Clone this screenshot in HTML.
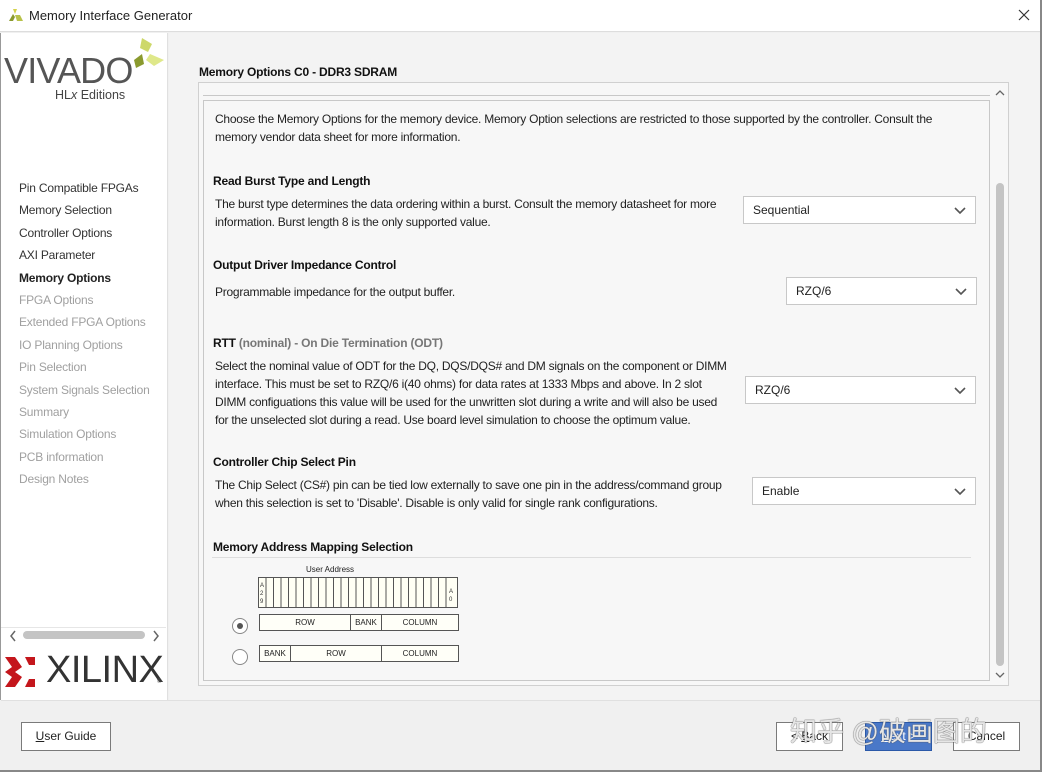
<!DOCTYPE html>
<html><head><meta charset="utf-8"><style>
*{margin:0;padding:0;box-sizing:border-box}
body{width:1042px;height:772px;position:relative;background:#f0f0f0;font-family:"Liberation Sans",Arial,sans-serif;font-size:12px;color:#222;overflow:hidden}
.a{position:absolute;white-space:nowrap}
.t{letter-spacing:-0.25px}
.h{font-weight:bold;font-size:12px;letter-spacing:-0.2px;color:#111}
.nav{position:absolute;left:19px;font-size:12px;color:#333;letter-spacing:-0.2px}
.nav.g{color:#a0a0a0}
.sel{position:absolute;height:28px;background:#fff;border:1px solid #c8c8c8;font-size:12px;padding:6px 9px;color:#222}
.sel svg{position:absolute;right:9px;top:10px}
.btn{position:absolute;height:29px;border:1px solid #7a7a7a;background:#fff;font-size:12px;text-align:center;line-height:27px}
.box{position:absolute;border:1px solid #555;background:#fffff8;font-size:8px;text-align:center;line-height:15px;height:17px}
</style></head><body>
<div class="a" style="left:0;top:0;width:1042px;height:32px;background:#fff;border-bottom:1px solid #ddd"></div>
<svg class="a" style="left:8px;top:7px" width="16" height="16"><polygon points="5,2 9,2 7,7" fill="#d4d24a"/><polygon points="7,8 12,8 15,14 9,14" fill="#b8c24a"/><polygon points="1,14 5,7 7,10 5,14" fill="#8a9a2e"/></svg>
<div class="a" style="left:29px;top:8px;font-size:13px;color:#222">Memory Interface Generator</div>
<svg class="a" style="left:1018px;top:9px" width="12" height="12"><path d="M1 1 L11 11 M11 1 L1 11" stroke="#333" stroke-width="1.2"/></svg>
<div class="a" style="left:0;top:33px;width:168px;height:667px;background:#fff;border-right:1px solid #e0e0e0;border-left:1px solid #999"></div>
<div class="a" style="left:4px;top:50px;font-size:36px;color:#555;letter-spacing:-0.8px;font-weight:300">VIVADO</div>
<svg class="a" style="left:132px;top:38px" width="34" height="32"><polygon points="10,0 20,6 16,14 8,10" fill="#cdd86a"/><polygon points="18,16 32,22 22,28 14,22" fill="#dfe88a"/><polygon points="2,22 10,16 12,26 4,30" fill="#8a9a2e"/></svg>
<div class="a" style="left:55px;top:88px;font-size:12.5px;color:#444">HL<i>x</i> Editions</div>
<div class="nav" style="top:181px">Pin Compatible FPGAs</div>
<div class="nav" style="top:203px">Memory Selection</div>
<div class="nav" style="top:226px">Controller Options</div>
<div class="nav" style="top:248px">AXI Parameter</div>
<div class="nav" style="top:271px;font-weight:bold;color:#222">Memory Options</div>
<div class="nav g" style="top:293px">FPGA Options</div>
<div class="nav g" style="top:315px">Extended FPGA Options</div>
<div class="nav g" style="top:338px">IO Planning Options</div>
<div class="nav g" style="top:360px">Pin Selection</div>
<div class="nav g" style="top:383px">System Signals Selection</div>
<div class="nav g" style="top:405px">Summary</div>
<div class="nav g" style="top:427px">Simulation Options</div>
<div class="nav g" style="top:450px">PCB information</div>
<div class="nav g" style="top:472px">Design Notes</div>
<div class="a" style="left:1px;top:627px;width:165px;height:1px;background:#e6e6e6"></div>
<svg class="a" style="left:9px;top:630px" width="8" height="12"><path d="M6 1 L2 6 L6 11" stroke="#666" stroke-width="1.5" fill="none"/></svg>
<div class="a" style="left:23px;top:631px;width:122px;height:8px;border-radius:4px;background:#c4c4c4"></div>
<svg class="a" style="left:152px;top:630px" width="8" height="12"><path d="M2 1 L6 6 L2 11" stroke="#666" stroke-width="1.5" fill="none"/></svg>
<svg class="a" style="left:5px;top:657px" width="30" height="30"><polygon points="0,0 10,0 17,10 10,15 17,20 10,30 0,30 7,20 0,15 7,10" fill="#c4161c"/><polygon points="20,0 30,0 30,8 24,8" fill="#c4161c"/><polygon points="20,30 30,30 30,22 24,22" fill="#c4161c"/></svg>
<div class="a" style="left:46px;top:649px;font-size:38px;color:#333;letter-spacing:-0.5px">XILINX</div>
<div class="a" style="left:157px;top:679px;font-size:6px;color:#555">®</div>
<div class="a" style="left:169px;top:33px;width:873px;height:667px;background:#f3f3f3"></div>
<div class="a h" style="left:199px;top:65px">Memory Options C0 - DDR3 SDRAM</div>
<div class="a" style="left:198px;top:82px;width:811px;height:604px;border:1px solid #d0d0d0;background:#f7f7f7"></div>
<div class="a" style="left:203px;top:82px;width:787px;height:14px;border-bottom:1px solid #c8c8c8"></div>
<div class="a" style="left:203px;top:100px;width:787px;height:581px;border:1px solid #c8c8c8;background:#f7f7f7"></div>
<svg class="a" style="left:995px;top:89px" width="10" height="8"><path d="M1 6 L5 2 L9 6" stroke="#666" stroke-width="1.3" fill="none"/></svg>
<div class="a" style="left:996px;top:183px;width:8px;height:483px;border-radius:4px;background:#c4c4c4"></div>
<svg class="a" style="left:995px;top:671px" width="10" height="8"><path d="M1 2 L5 6 L9 2" stroke="#666" stroke-width="1.3" fill="none"/></svg>

<div class="a t" style="left:215px;top:110px;line-height:18px">Choose the Memory Options for the memory device. Memory Option selections are restricted to those supported by the controller. Consult the<br>memory vendor data sheet for more information.</div>

<div class="a h" style="left:213px;top:174px">Read Burst Type and Length</div>
<div class="a t" style="left:215px;top:195px;line-height:18px">The burst type determines the data ordering within a burst. Consult the memory datasheet for more<br>information. Burst length 8 is the only supported value.</div>
<div class="sel" style="left:743px;top:196px;width:233px">Sequential<svg width="12" height="8"><path d="M1 1 L6 6 L11 1" stroke="#555" stroke-width="1.6" fill="none"/></svg></div>

<div class="a h" style="left:213px;top:258px">Output Driver Impedance Control</div>
<div class="a t" style="left:215px;top:285px">Programmable impedance for the output buffer.</div>
<div class="sel" style="left:786px;top:277px;width:191px">RZQ/6<svg width="12" height="8"><path d="M1 1 L6 6 L11 1" stroke="#555" stroke-width="1.6" fill="none"/></svg></div>

<div class="a h" style="left:213px;top:336px">RTT <span style="color:#777">(nominal) - On Die Termination (ODT)</span></div>
<div class="a t" style="left:215px;top:357px;line-height:18px">Select the nominal value of ODT for the DQ, DQS/DQS# and DM signals on the component or DIMM<br>interface. This must be set to RZQ/6 i(40 ohms) for data rates at 1333 Mbps and above. In 2 slot<br>DIMM configuations this value will be used for the unwritten slot during a write and will also be used<br>for the unselected slot during a read. Use board level simulation to choose the optimum value.</div>
<div class="sel" style="left:745px;top:376px;width:231px">RZQ/6<svg width="12" height="8"><path d="M1 1 L6 6 L11 1" stroke="#555" stroke-width="1.6" fill="none"/></svg></div>

<div class="a h" style="left:213px;top:455px">Controller Chip Select Pin</div>
<div class="a t" style="left:215px;top:476px;line-height:18px">The Chip Select (CS#) pin can be tied low externally to save one pin in the address/command group<br>when this selection is set to 'Disable'. Disable is only valid for single rank configurations.</div>
<div class="sel" style="left:752px;top:477px;width:224px">Enable<svg width="12" height="8"><path d="M1 1 L6 6 L11 1" stroke="#555" stroke-width="1.6" fill="none"/></svg></div>

<div class="a h" style="left:213px;top:540px">Memory Address Mapping Selection</div>
<div class="a" style="left:212px;top:557px;width:759px;height:1px;background:#ddd"></div>
<div class="a" style="left:306px;top:565px;font-size:8px;color:#222">User Address</div>
<svg class="a" style="left:258px;top:577px" width="202" height="32"><rect x="0.5" y="0.5" width="199" height="30" fill="#fffff4" stroke="#555"/>
<g stroke="#555"><line x1="8" y1="0" x2="8" y2="31"/><line x1="15.5" y1="0" x2="15.5" y2="31"/><line x1="23" y1="0" x2="23" y2="31"/><line x1="30.5" y1="0" x2="30.5" y2="31"/><line x1="38" y1="0" x2="38" y2="31"/><line x1="45.5" y1="0" x2="45.5" y2="31"/><line x1="53" y1="0" x2="53" y2="31"/><line x1="60.5" y1="0" x2="60.5" y2="31"/><line x1="68" y1="0" x2="68" y2="31"/><line x1="75.5" y1="0" x2="75.5" y2="31"/><line x1="83" y1="0" x2="83" y2="31"/><line x1="90.5" y1="0" x2="90.5" y2="31"/><line x1="98" y1="0" x2="98" y2="31"/><line x1="105.5" y1="0" x2="105.5" y2="31"/><line x1="113" y1="0" x2="113" y2="31"/><line x1="120.5" y1="0" x2="120.5" y2="31"/><line x1="128" y1="0" x2="128" y2="31"/><line x1="135.5" y1="0" x2="135.5" y2="31"/><line x1="143" y1="0" x2="143" y2="31"/><line x1="150.5" y1="0" x2="150.5" y2="31"/><line x1="158" y1="0" x2="158" y2="31"/><line x1="165.5" y1="0" x2="165.5" y2="31"/><line x1="173" y1="0" x2="173" y2="31"/><line x1="180.5" y1="0" x2="180.5" y2="31"/><line x1="188" y1="0" x2="188" y2="31"/></g>
<text x="2" y="10" font-size="6" font-family="Liberation Sans" fill="#333">A</text><text x="2" y="18" font-size="6" font-family="Liberation Sans" fill="#333">2</text><text x="2" y="26" font-size="6" font-family="Liberation Sans" fill="#333">9</text>
<text x="191" y="16" font-size="6" font-family="Liberation Sans" fill="#333">A</text><text x="191" y="24" font-size="6" font-family="Liberation Sans" fill="#333">0</text></svg>
<div class="a" style="left:232px;top:618px;width:16px;height:16px;border-radius:50%;border:1px solid #888;background:#fff"></div>
<div class="a" style="left:237px;top:623px;width:6px;height:6px;border-radius:50%;background:#555"></div>
<div class="box" style="left:259px;top:614px;width:92px">ROW</div>
<div class="box" style="left:350px;top:614px;width:32px">BANK</div>
<div class="box" style="left:381px;top:614px;width:78px">COLUMN</div>
<div class="a" style="left:232px;top:649px;width:16px;height:16px;border-radius:50%;border:1px solid #888;background:#fff"></div>
<div class="box" style="left:259px;top:645px;width:32px">BANK</div>
<div class="box" style="left:290px;top:645px;width:92px">ROW</div>
<div class="box" style="left:381px;top:645px;width:78px">COLUMN</div>

<div class="a" style="left:1px;top:700px;width:1041px;height:1px;background:#e0e0e0"></div>
<div class="btn" style="left:21px;top:722px;width:90px"><u>U</u>ser Guide</div>
<div class="btn" style="left:776px;top:722px;width:67px">&lt; <u>B</u>ack</div>
<div class="btn" style="left:865px;top:722px;width:67px;background:#4a78c8;border-color:#2a58a8;color:#fff"><u>N</u>ext &gt;</div>
<div class="btn" style="left:953px;top:722px;width:67px">Cancel</div>
<div class="a" style="left:790px;top:710px;font-size:27px;color:rgba(255,255,255,0.85);font-family:'Liberation Sans','Noto Sans CJK SC',sans-serif;text-shadow:0 0 1px #555,0 0 1px #555">知乎 @破画图的</div>
<div class="a" style="left:1040px;top:0;width:2px;height:772px;background:#888"></div>
<div class="a" style="left:0;top:770px;width:1042px;height:2px;background:#888"></div>
</body></html>
